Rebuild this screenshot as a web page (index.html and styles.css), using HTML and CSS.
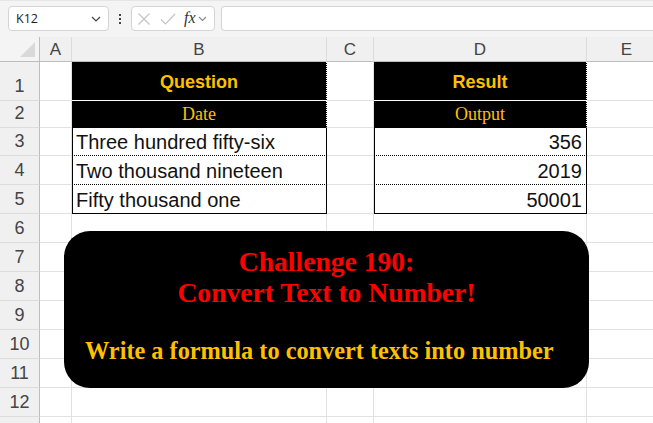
FILE: index.html
```html
<!DOCTYPE html>
<html>
<head>
<meta charset="utf-8">
<link rel="stylesheet" href="styles.css">
</head>
<body>
<div class="app">
  <div class="toolbar">
    <div class="namebox">
      <span class="nb-text">K12</span>
      <svg class="chev" width="10" height="6" viewBox="0 0 10 6"><path d="M1 1 L5 5 L9 1" fill="none" stroke="#444" stroke-width="1.2"/></svg>
    </div>
    <div class="vdots"><i></i><i></i><i></i></div>
    <div class="fxbox">
      <svg class="ico" width="14" height="14" viewBox="0 0 14 14"><path d="M1.5 1.5 L12.5 12.5 M12.5 1.5 L1.5 12.5" stroke="#c4c4c4" stroke-width="1.2" fill="none"/></svg>
      <svg class="ico chk" width="16" height="14" viewBox="0 0 16 14"><path d="M1 7.5 L5.5 12 L15 2" stroke="#c4c4c4" stroke-width="1.2" fill="none"/></svg>
      <span class="fx">fx</span>
      <svg class="chev2" width="9" height="6" viewBox="0 0 9 6"><path d="M1 1 L4.5 4.5 L8 1" fill="none" stroke="#888" stroke-width="1.1"/></svg>
    </div>
    <div class="formula"></div>
  </div>

  <div class="sheet">
    <div class="grid">
      <!-- header row -->
      <div class="corner"><span class="tri"></span></div>
      <div class="ch">A</div>
      <div class="ch">B</div>
      <div class="ch">C</div>
      <div class="ch">D</div>
      <div class="ch">E</div>

      <!-- row 1 -->
      <div class="rh">1</div>
      <div class="c"></div>
      <div class="c blk title">Question</div>
      <div class="c"></div>
      <div class="c blk title">Result</div>
      <div class="c"></div>

      <!-- row 2 -->
      <div class="rh">2</div>
      <div class="c"></div>
      <div class="c blk sub">Date</div>
      <div class="c"></div>
      <div class="c blk sub">Output</div>
      <div class="c"></div>

      <!-- row 3 -->
      <div class="rh">3</div>
      <div class="c"></div>
      <div class="c tb dot txt">Three hundred fifty-six</div>
      <div class="c"></div>
      <div class="c tb dot num">356</div>
      <div class="c"></div>

      <!-- row 4 -->
      <div class="rh">4</div>
      <div class="c"></div>
      <div class="c tb dot txt">Two thousand nineteen</div>
      <div class="c"></div>
      <div class="c tb dot num">2019</div>
      <div class="c"></div>

      <!-- row 5 -->
      <div class="rh">5</div>
      <div class="c"></div>
      <div class="c tb last txt">Fifty thousand one</div>
      <div class="c"></div>
      <div class="c tb last num">50001</div>
      <div class="c"></div>

      <div class="rh">6</div><div class="c"></div><div class="c"></div><div class="c"></div><div class="c"></div><div class="c"></div>
      <div class="rh">7</div><div class="c"></div><div class="c"></div><div class="c"></div><div class="c"></div><div class="c"></div>
      <div class="rh">8</div><div class="c"></div><div class="c"></div><div class="c"></div><div class="c"></div><div class="c"></div>
      <div class="rh">9</div><div class="c"></div><div class="c"></div><div class="c"></div><div class="c"></div><div class="c"></div>
      <div class="rh">10</div><div class="c"></div><div class="c"></div><div class="c"></div><div class="c"></div><div class="c"></div>
      <div class="rh">11</div><div class="c"></div><div class="c"></div><div class="c"></div><div class="c"></div><div class="c"></div>
      <div class="rh">12</div><div class="c"></div><div class="c"></div><div class="c"></div><div class="c"></div><div class="c"></div>
      <div class="rh"></div><div class="c"></div><div class="c"></div><div class="c"></div><div class="c"></div><div class="c"></div>
    </div>

    <div class="challenge">
      <div class="ch-title">Challenge 190:<br>Convert Text to Number!</div>
      <div class="ch-desc">Write a formula to convert texts into number</div>
    </div>
  </div>
</div>
</body>
</html>
```

FILE: styles.css
```css
html, body {
  margin: 0;
  padding: 0;
  background: #ffffff;
  overflow: hidden;
}

.app {
  width: 653px;
  height: 423px;
  overflow: hidden;
  font-family: "Liberation Sans", Arial, sans-serif;
}

/* ---------- formula bar ---------- */
.toolbar {
  height: 37px;
  box-sizing: border-box;
  background: #f4f4f4;
  border-top: 1px solid #e6e6e6;
  display: flex;
  align-items: flex-start;
  padding: 5px 0 0 8px;
}

.namebox {
  width: 101px;
  height: 25px;
  box-sizing: border-box;
  background: #fff;
  border: 1px solid #d4d4d4;
  border-radius: 4px;
  display: flex;
  align-items: center;
  justify-content: space-between;
  padding: 0 7px 0 7px;
}

.nb-text {
  font-family: "Open Sans", "Liberation Sans", sans-serif;
  font-size: 12.5px;
  color: #222;
}

.vdots {
  width: 22px;
  height: 25px;
  display: flex;
  flex-direction: column;
  align-items: center;
  justify-content: center;
  gap: 2px;
}
.vdots i {
  display: block;
  width: 2px;
  height: 2px;
  background: #444;
}

.fxbox {
  width: 84px;
  height: 25px;
  box-sizing: border-box;
  background: #fff;
  border: 1px solid #d4d4d4;
  border-radius: 4px;
  display: flex;
  align-items: center;
  padding-left: 5px;
}
.fxbox .ico { margin-right: 9px; }
.fxbox .chk { margin-right: 8px; }
.fx {
  font-family: "Liberation Serif", "Times New Roman", serif;
  font-style: italic;
  font-size: 16px;
  color: #333;
  margin-right: 2px;
  margin-top: -2px;
}

.formula {
  flex: 1;
  height: 25px;
  margin-left: 6px;
  box-sizing: border-box;
  background: #fff;
  border: 1px solid #d4d4d4;
  border-right: none;
  border-radius: 4px 0 0 4px;
}

/* ---------- sheet grid ---------- */
.sheet {
  position: relative;
}

.grid {
  display: grid;
  grid-template-columns: 40px 32px 255px 47px 213px 80px;
  grid-template-rows: 25px 39px 27px 28px 29px 29px 29px 29px 29px 29px 29px 29px 29px 29px;
  font-family: "Liberation Sans", Arial, sans-serif;
}

.grid > div {
  box-sizing: border-box;
}

.corner {
  background: #f4f4f4;
  border-right: 1px solid #bdbdbd;
  border-bottom: 1px solid #bdbdbd;
  position: relative;
}
.tri {
  position: absolute;
  right: 4px;
  bottom: 4px;
  width: 0;
  height: 0;
  border-left: 15px solid transparent;
  border-bottom: 15px solid #d9d9d9;
}

.ch {
  background: #f0f0f0;
  border-right: 1px solid #dcdcdc;
  border-bottom: 1px solid #bdbdbd;
  display: flex;
  align-items: center;
  justify-content: center;
  font-size: 17px;
  color: #444;
  padding-top: 1px;
}

.rh {
  background: #f0f0f0;
  border-right: 1px solid #bdbdbd;
  border-bottom: 1px solid #dcdcdc;
  display: flex;
  align-items: flex-end;
  justify-content: center;
  font-size: 18px;
  line-height: 20px;
  color: #444;
  padding-bottom: 4px;
}

.c {
  border-right: 1px solid #e1e1e1;
  border-bottom: 1px solid #e1e1e1;
  background: #fff;
}

.blk {
  background: #000;
  border-right: 1px dotted #ffffff;
  display: flex;
  align-items: center;
  justify-content: center;
  color: #ffc000;
}

.title {
  font-weight: bold;
  font-size: 18px;
  border-bottom: 1px solid #ffffff;
  padding-top: 2px;
}

.sub {
  font-family: "Liberation Serif", "Times New Roman", serif;
  font-size: 18px;
  border-bottom: 1px solid #000;
  padding-top: 1px;
}

.tb {
  border-left: 1px solid #000;
  border-right: 1px solid #000;
  display: flex;
  align-items: flex-end;
  font-size: 20px;
  line-height: 22px;
  color: #111;
  padding-bottom: 2px;
  white-space: nowrap;
}
.dot { border-bottom: 1px dotted #000; }
.last { border-bottom: 1px solid #000; }

.txt {
  padding-left: 3px;
}
.num {
  justify-content: flex-end;
  padding-right: 4px;
}

/* ---------- challenge box ---------- */
.challenge {
  position: absolute;
  left: 64px;
  top: 194px;
  width: 525px;
  height: 157px;
  box-sizing: border-box;
  background: #000;
  border-radius: 26px;
  padding: 15px 0 0 21px;
  font-family: "Liberation Serif", "Times New Roman", serif;
  font-weight: bold;
}

.ch-title {
  color: #ff0000;
  font-size: 27.6px;
  line-height: 31px;
  text-align: center;
  margin-left: -21px;
}

.ch-desc {
  color: #ffc000;
  font-size: 24.3px;
  line-height: 27px;
  margin-top: 29px;
  white-space: nowrap;
}
```
